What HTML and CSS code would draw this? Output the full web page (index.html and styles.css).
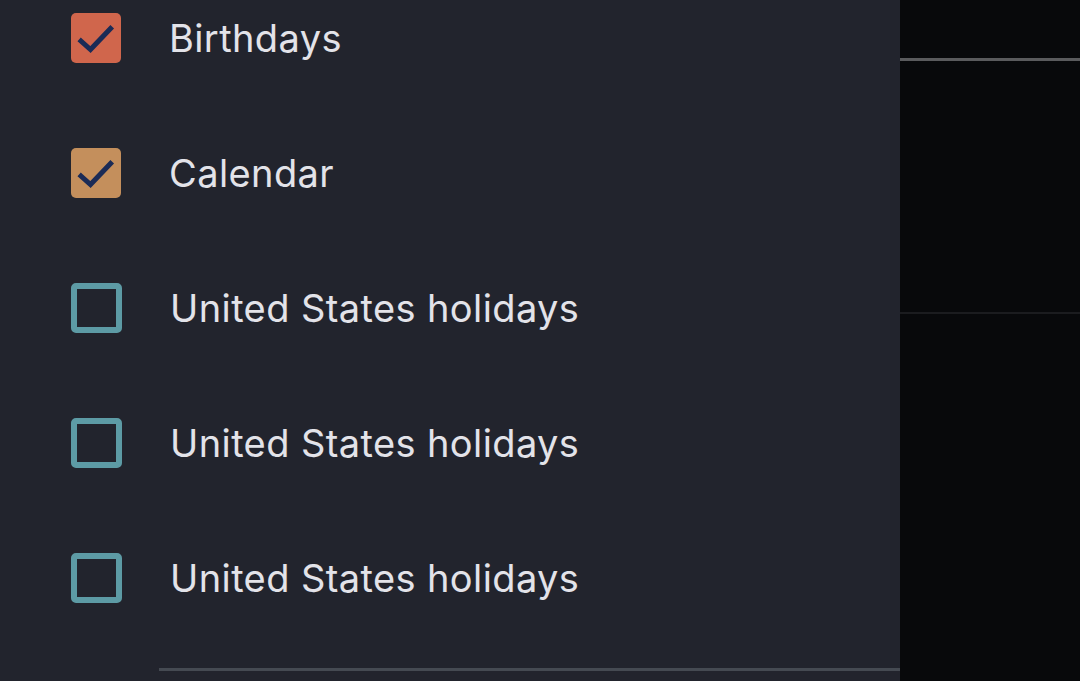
FILE: index.html
```html
<!DOCTYPE html>
<html>
<head>
<meta charset="utf-8">
<link rel="stylesheet" href="styles.css">
</head>
<body>
<div class="app">
  <aside class="drawer">
    <ul class="cal-list">
      <li class="cal-item">
        <span class="box checked orange">
          <svg viewBox="0 0 50 50" width="50" height="50"><polyline points="10,28 19.5,36.5 39.5,15.5" fill="none" stroke="#1b2b56" stroke-width="5" stroke-linecap="square"/></svg>
        </span>
        <span class="label">Birthdays</span>
      </li>
      <li class="cal-item">
        <span class="box checked tan">
          <svg viewBox="0 0 50 50" width="50" height="50"><polyline points="10,28 19.5,36.5 39.5,15.5" fill="none" stroke="#1b2b56" stroke-width="5" stroke-linecap="square"/></svg>
        </span>
        <span class="label">Calendar</span>
      </li>
      <li class="cal-item">
        <span class="box unchecked"></span>
        <span class="label">United States holidays</span>
      </li>
      <li class="cal-item">
        <span class="box unchecked"></span>
        <span class="label">United States holidays</span>
      </li>
      <li class="cal-item">
        <span class="box unchecked"></span>
        <span class="label">United States holidays</span>
      </li>
    </ul>
    <div class="divider"></div>
  </aside>
  <main class="main">
    <div class="main-top"></div>
    <div class="main-mid"></div>
    <div class="main-rest"></div>
  </main>
</div>
</body>
</html>
```

FILE: styles.css
```css
html, body {
  margin: 0;
  padding: 0;
  height: 100%;
  overflow: hidden;
  background: #08090b;
}
.app {
  display: flex;
  width: 1080px;
  height: 681px;
  overflow: hidden;
}
.drawer {
  width: 900px;
  flex: none;
  background: #22242d;
  display: flex;
  flex-direction: column;
}
.cal-list {
  list-style: none;
  margin: -30px 0 0 0;
  padding: 0 0 0 71px;
}
.cal-item {
  height: 135px;
  display: flex;
  align-items: center;
  gap: 48px;
}
.box {
  width: 50px;
  height: 50px;
  box-sizing: border-box;
  border-radius: 5px;
  flex: none;
  display: flex;
}
.box svg {
  display: block;
}
.box.orange {
  background: #d0664c;
}
.box.tan {
  background: #c48f5c;
}
.box.unchecked {
  border: 6px solid #5d9ba5;
  width: 51px;
}
.label {
  font-family: Inter, "Open Sans", sans-serif;
  font-size: 38px;
  color: #e3e3e9;
  letter-spacing: 0.4px;
}
.divider {
  margin: 23px 0 0 159px;
  height: 3px;
  background: #454a52;
}
.main {
  flex: 1;
  display: flex;
  flex-direction: column;
}
.main-top {
  height: 58px;
  border-bottom: 3px solid #5a5b5d;
}
.main-mid {
  height: 251px;
  border-bottom: 2px solid #1b1c1f;
}
.main-rest {
  flex: 1;
}
```
